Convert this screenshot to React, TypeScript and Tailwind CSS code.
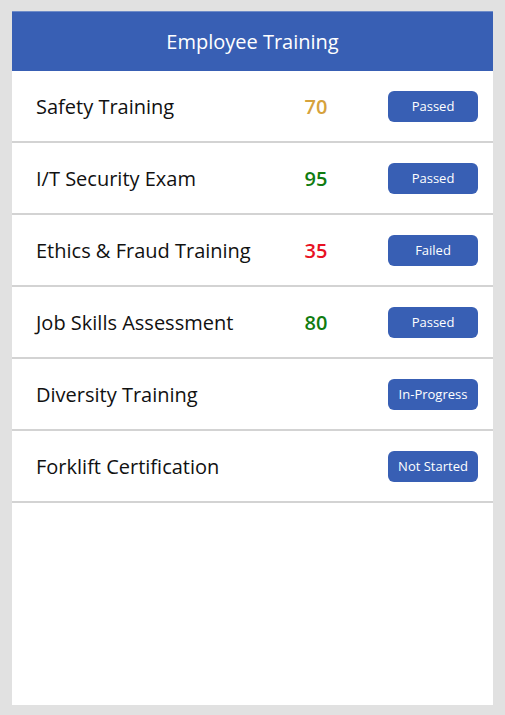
import React from "react";

type Item = { name: string; score?: number; color?: string; status: string };

const items: Item[] = [
  { name: "Safety Training", score: 70, color: "text-[#d6a23c]", status: "Passed" },
  { name: "I/T Security Exam", score: 95, color: "text-[#107c10]", status: "Passed" },
  { name: "Ethics & Fraud Training", score: 35, color: "text-[#e81123]", status: "Failed" },
  { name: "Job Skills Assessment", score: 80, color: "text-[#107c10]", status: "Passed" },
  { name: "Diversity Training", status: "In-Progress" },
  { name: "Forklift Certification", status: "Not Started" },
];

export default function App() {
  return (
    <div
      className="w-[505px] h-[715px] bg-[#e1e1e1] pt-[11px] pl-[12px]"
      style={{ fontFamily: '"Open Sans", "Noto Sans", sans-serif' }}
    >
      <div className="w-[481px] h-[694px] bg-white flex flex-col">
        <div className="h-[60px] shrink-0 bg-[#385fb4] border-t border-[#6f8cc8] flex items-center justify-center text-white text-[20px]">
          Employee Training
        </div>
        {items.map((it) => (
          <div
            key={it.name}
            className="h-[72px] shrink-0 border-b-2 border-[#d3d3d3] flex items-center pl-[24px] pr-[15px] pt-[1px]"
          >
            <div className="flex-1 text-[20px] text-[#111111]">{it.name}</div>
            <div className={`w-[62px] text-center text-[20px] font-semibold ${it.color ?? ""}`}>
              {it.score ?? ""}
            </div>
            <div className="w-[41px]" />
            <div className="w-[90px] h-[31px] rounded-[6px] bg-[#385fb4] text-white text-[13px] flex items-center justify-center">
              {it.status}
            </div>
          </div>
        ))}
      </div>
    </div>
  );
}
